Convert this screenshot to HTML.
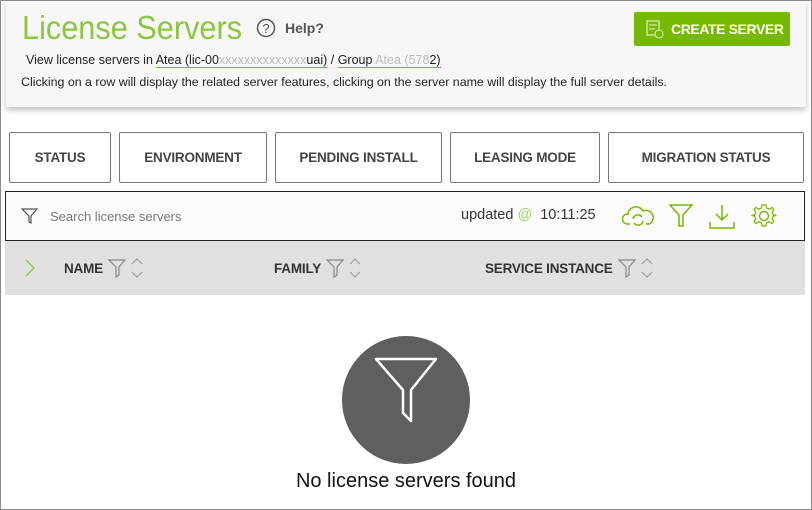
<!DOCTYPE html>
<html><head><style>
*{box-sizing:border-box;margin:0;padding:0}
body{width:812px;height:510px;overflow:hidden;background:#fff;font-family:"Liberation Sans",sans-serif;position:relative}
.frame{position:absolute;left:0;top:0;width:812px;height:510px;border:1px solid #888;pointer-events:none}
.abs{position:absolute}
.card{left:6px;top:0;width:800px;height:107px;background:#f7f7f7;box-shadow:0 3px 6px rgba(0,0,0,.25)}
.btn{position:absolute;top:132px;height:51px;border:1px solid #777;border-radius:2px;background:#fff;font-weight:bold;font-size:13.5px;color:#444;display:flex;align-items:center;justify-content:center;letter-spacing:-0.2px}
.u{border-bottom:1px solid #76b900;color:#222}
.th{position:absolute;top:257px;font-weight:bold;font-size:13.5px;color:#333;display:flex;align-items:center;letter-spacing:-0.2px}
.th svg{margin-left:5px}
</style></head><body>
<div class="abs card"></div>
<div class="abs" style="left:22px;top:9px;font-size:33px;color:#8cc63f;transform:scaleX(0.93);transform-origin:left;">License Servers</div>
<svg class="abs" style="left:256px;top:18px" width="20" height="20"><circle cx="10" cy="10" r="8.5" fill="none" stroke="#555" stroke-width="1.5"/><text x="10" y="15" font-size="13" text-anchor="middle" fill="#555" font-family="Liberation Sans">?</text></svg>
<div class="abs" style="left:285px;top:20px;font-size:14px;font-weight:bold;color:#555">Help?</div>
<div class="abs" style="left:634px;top:12px;width:156px;height:34px;background:#76b900;border-radius:2px;color:#fff;font-weight:bold;font-size:14px;letter-spacing:-0.4px;display:flex;align-items:center;padding-left:37px">CREATE SERVER</div>
<svg class="abs" style="left:646px;top:20px" width="18" height="19"><rect x="1" y="1" width="12" height="14" fill="none" stroke="#dfeecb" stroke-width="1.2"/><line x1="3" y1="5" x2="11" y2="5" stroke="#dfeecb"/><line x1="3" y1="9" x2="9" y2="9" stroke="#dfeecb"/><circle cx="13" cy="14" r="4" fill="#76b900" stroke="#dfeecb"/></svg>
<div class="abs" style="left:26px;top:53px;font-size:12.5px;color:#222">View license servers in <span class="u">Atea (lic-00<span style="color:#bbb">xxxxxxxxxxxxxx</span>uai)</span> / <span class="u">Group <span style="color:#bbb">Atea (578</span>2)</span></div>
<div class="abs" style="left:21px;top:75px;font-size:12.4px;color:#222">Clicking on a row will display the related server features, clicking on the server name will display the full server details.</div>
<div class="btn" style="left:9px;width:102px">STATUS</div>
<div class="btn" style="left:119px;width:148px">ENVIRONMENT</div>
<div class="btn" style="left:275px;width:167px">PENDING INSTALL</div>
<div class="btn" style="left:450px;width:150px">LEASING MODE</div>
<div class="btn" style="left:608px;width:196px">MIGRATION STATUS</div>
<div class="abs" style="left:5px;top:191px;width:800px;height:50px;border:1px solid #222;background:#fcfcfc"></div>
<svg class="abs" style="left:21px;top:207px" width="18" height="18"><path d="M1 2H16L10 9V16L8 15V9Z" fill="none" stroke="#555" stroke-width="1.2"/></svg>
<div class="abs" style="left:50px;top:209px;font-size:13px;color:#777">Search license servers</div>
<div class="abs" style="left:461px;top:207px;font-size:14.5px;color:#333">updated <span style="color:#9cd463">@</span> &nbsp;10:11:25</div>
<svg class="abs" style="left:622px;top:202px" width="32" height="28"><path d="M8 22H5A5 5 0 0 1 6 12A8 8 0 0 1 21 9A6 6 0 0 1 27 22H24" fill="none" stroke="#76b900" stroke-width="1.5"/><path d="M11 17A5 5 0 0 1 20 15M21 19A5 5 0 0 1 12 21" fill="none" stroke="#76b900" stroke-width="1.5"/></svg>
<svg class="abs" style="left:669px;top:204px" width="24" height="24"><path d="M1 1H23L14 11V22L10 22V11Z" fill="none" stroke="#76b900" stroke-width="1.5"/></svg>
<svg class="abs" style="left:709px;top:204px" width="26" height="26"><path d="M13 1V16M7 10L13 16L19 10M1 18V24H25V18" fill="none" stroke="#76b900" stroke-width="1.5"/></svg>
<svg class="abs" style="left:751px;top:203px" width="26" height="26" viewBox="0 0 26 26"><circle cx="13" cy="13" r="4.5" fill="none" stroke="#76b900" stroke-width="1.4"/><path d="M11 2H15L15.6 5.2L18.5 6.5L21.2 4.6L23.4 6.8L21.5 9.5L22.8 12.4L26 13V13L22.8 13.6L21.5 16.5L23.4 19.2L21.2 21.4L18.5 19.5L15.6 20.8L15 24H11L10.4 20.8L7.5 19.5L4.8 21.4L2.6 19.2L4.5 16.5L3.2 13.6L0 13L3.2 12.4L4.5 9.5L2.6 6.8L4.8 4.6L7.5 6.5L10.4 5.2Z" fill="none" stroke="#76b900" stroke-width="1.3" transform="translate(0.5 0) scale(0.96)"/></svg>
<div class="abs" style="left:5px;top:241px;width:800px;height:54px;background:#e0e0e0"></div>
<svg class="abs" style="left:24px;top:259px" width="12" height="18"><path d="M2 1L10 9L2 17" fill="none" stroke="#8cc63f" stroke-width="1.3"/></svg>
<div class="th" style="left:64px">NAME<svg width="40" height="22"><path d="M1 3H17L11 10V18L8 20V10Z" fill="none" stroke="#888" stroke-width="1.2"/><path d="M24 7L29 2L34 7M24 15L29 20L34 15" fill="none" stroke="#999" stroke-width="1"/></svg></div>
<div class="th" style="left:274px">FAMILY<svg width="40" height="22"><path d="M1 3H17L11 10V18L8 20V10Z" fill="none" stroke="#888" stroke-width="1.2"/><path d="M24 7L29 2L34 7M24 15L29 20L34 15" fill="none" stroke="#999" stroke-width="1"/></svg></div>
<div class="th" style="left:485px">SERVICE INSTANCE<svg width="40" height="22"><path d="M1 3H17L11 10V18L8 20V10Z" fill="none" stroke="#888" stroke-width="1.2"/><path d="M24 7L29 2L34 7M24 15L29 20L34 15" fill="none" stroke="#999" stroke-width="1"/></svg></div>
<svg class="abs" style="left:341px;top:335px" width="130" height="130"><circle cx="65" cy="65" r="64" fill="#5f5f5f"/><path d="M35 24H95L70 55V86L62 78V55Z" fill="none" stroke="#fff" stroke-width="2.5" stroke-linejoin="round"/></svg>
<div class="abs" style="left:0;width:812px;top:470px;text-align:center;font-size:20px;color:#111">No license servers found</div>
<div class="frame"></div>
</body></html>
